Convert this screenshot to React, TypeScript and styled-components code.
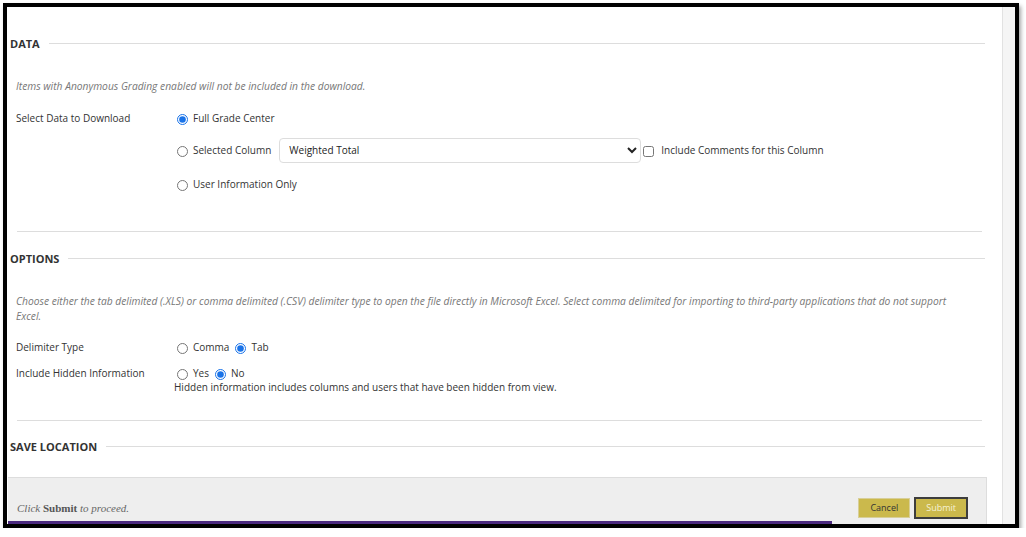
import React from 'react'
import styled, { createGlobalStyle } from 'styled-components'

const GlobalStyle = createGlobalStyle`
  html, body {
    margin: 0;
    padding: 0;
    background: #ffffff;
  }
  body {
    font-family: "Open Sans", "Liberation Sans", Arial, sans-serif;
    font-size: 10px;
    color: #333333;
  }
`

const Frame = styled.div`
  margin: 3px 0 0 3px;
  width: 1016px;
  height: 525px;
  box-sizing: border-box;
  border: 4px solid #000000;
  box-shadow: 2px 3px 4px rgba(0, 0, 0, 0.35);
  display: flex;
  overflow: hidden;
  background: #ffffff;
`

const Main = styled.div`
  flex: 1;
  display: flex;
  flex-direction: column;
  padding: 23px 17px 0 1px;
  min-width: 0;
`

const ScrollTrack = styled.div`
  width: 12px;
  background: #f5f5f5;
  border-left: 1px solid #e2e2e2;
`

const SectionHeading = styled.h2<{ $top?: number }>`
  display: flex;
  align-items: center;
  margin: ${({ $top }) => $top ?? 0}px 0 0;
  padding-left: 2px;
  height: 26px;
  font-size: 11px;
  font-weight: 700;
  color: #333333;
  text-transform: uppercase;

  &::after {
    content: '';
    flex: 1;
    height: 1px;
    margin-left: 9px;
    background: #dddddd;
  }
`

const SectionBody = styled.div<{ $gapTop: number }>`
  padding-left: 8px;
  margin-top: ${({ $gapTop }) => $gapTop}px;
`

const Note = styled.p`
  margin: 0;
  max-width: 935px;
  font-size: 10.25px;
  font-style: italic;
  color: #777777;
  line-height: 15px;
`

const FieldGrid = styled.div<{ $top: number; $rowGap: number }>`
  display: grid;
  grid-template-columns: 158px 1fr;
  row-gap: ${({ $rowGap }) => $rowGap}px;
  margin-top: ${({ $top }) => $top}px;
  align-items: start;
`

const FieldLabel = styled.div<{ $h: number }>`
  line-height: ${({ $h }) => $h}px;
  color: #333333;
`

const OptionList = styled.div`
  display: flex;
  flex-direction: column;
  gap: 8px;
`

const OptionRow = styled.div<{ $h: number; $push?: number }>`
  display: flex;
  align-items: center;
  height: ${({ $h }) => $h}px;
  margin-top: ${({ $push }) => $push ?? 0}px;
`

const Radio = styled.input.attrs({ type: 'radio' })`
  width: 11px;
  height: 11px;
  margin: 2px 5px 0 3px;
  accent-color: #1a73e8;
`

const Check = styled.input.attrs({ type: 'checkbox' })`
  width: 11px;
  height: 11px;
  margin: 2px 7px 0 2px;
`

const OptionText = styled.label`
  color: #333333;
  margin-right: 3px;
  white-space: nowrap;
`

const ColumnSelect = styled.select`
  width: 362px;
  height: 25px;
  margin-left: 5px;
  padding: 0 4px 0 5px;
  border: 1px solid #dddddd;
  border-radius: 4px;
  background: #ffffff;
  font-family: "Open Sans", "Liberation Sans", Arial, sans-serif;
  font-size: 10px;
  color: #222222;
`

const HelpText = styled.div`
  line-height: 13px;
  color: #333333;
`

const Divider = styled.hr<{ $top: number }>`
  margin: ${({ $top }) => $top}px 3px 0 9px;
  border: 0;
  border-top: 1px solid #dddddd;
  height: 0;
`

const Footer = styled.div`
  margin-top: 18px;
  margin-right: -2px;
  flex: 1;
  display: flex;
  flex-direction: column;
  padding-top: 18px;
  background: #eeeeee;
  border-top: 1px solid #dddddd;
  border-right: 1px solid #dddddd;
`

const FooterRow = styled.div`
  display: flex;
  align-items: center;
  justify-content: space-between;
  padding: 0 18px 0 9px;
  height: 23px;
`

const FooterText = styled.p`
  margin: 0;
  font-family: "Liberation Serif", "DejaVu Serif", serif;
  font-style: italic;
  font-size: 11px;
  color: #666666;

  strong {
    font-style: normal;
    font-weight: 700;
    color: #555555;
  }
`

const ButtonGroup = styled.div`
  display: flex;
  gap: 4px;
  align-items: center;
`

const ActionButton = styled.button<{ $primary?: boolean }>`
  height: ${({ $primary }) => ($primary ? 22 : 20)}px;
  padding: 0 ${({ $primary }) => ($primary ? 10 : 11)}px;
  background: #cbb94c;
  border: ${({ $primary }) => ($primary ? '2px solid #3d3d3d' : '1px solid #d8cf98')};
  border-radius: 0;
  font-family: "Open Sans", "Liberation Sans", Arial, sans-serif;
  font-size: 9px;
  color: ${({ $primary }) => ($primary ? '#f6f2d6' : '#333333')};
`

const AccentBar = styled.div`
  margin-top: auto;
  width: 824px;
  height: 3px;
  background: #4b2a7f;
`

const App = () => {
  return (
    <>
      <GlobalStyle />
      <Frame>
        <Main>
          <SectionHeading>Data</SectionHeading>
          <SectionBody $gapTop={23}>
            <Note>Items with Anonymous Grading enabled will not be included in the download.</Note>
            <FieldGrid $top={12} $rowGap={0}>
              <FieldLabel $h={24}>Select Data to Download</FieldLabel>
              <OptionList>
                <OptionRow $h={24}>
                  <Radio name="data" id="full" defaultChecked />
                  <OptionText htmlFor="full">Full Grade Center</OptionText>
                </OptionRow>
                <OptionRow $h={24}>
                  <Radio name="data" id="column" />
                  <OptionText htmlFor="column">Selected Column</OptionText>
                  <ColumnSelect defaultValue="weighted">
                    <option value="weighted">Weighted Total</option>
                    <option value="total">Total</option>
                  </ColumnSelect>
                  <Check id="comments" />
                  <OptionText htmlFor="comments">Include Comments for this Column</OptionText>
                </OptionRow>
                <OptionRow $h={24} $push={2}>
                  <Radio name="data" id="user" />
                  <OptionText htmlFor="user">User Information Only</OptionText>
                </OptionRow>
              </OptionList>
            </FieldGrid>
          </SectionBody>
          <Divider $top={35} />

          <SectionHeading $top={13}>Options</SectionHeading>
          <SectionBody $gapTop={23}>
            <Note>
              Choose either the tab delimited (.XLS) or comma delimited (.CSV) delimiter type to open the file directly in
              Microsoft Excel. Select comma delimited for importing to third-party applications that do not support Excel.
            </Note>
            <FieldGrid $top={15} $rowGap={10}>
              <FieldLabel $h={16}>Delimiter Type</FieldLabel>
              <OptionRow $h={16}>
                <Radio name="delim" id="comma" />
                <OptionText htmlFor="comma">Comma</OptionText>
                <Radio name="delim" id="tab" defaultChecked />
                <OptionText htmlFor="tab">Tab</OptionText>
              </OptionRow>
              <FieldLabel $h={16}>Include Hidden Information</FieldLabel>
              <div>
                <OptionRow $h={16}>
                  <Radio name="hidden" id="yes" />
                  <OptionText htmlFor="yes">Yes</OptionText>
                  <Radio name="hidden" id="no" defaultChecked />
                  <OptionText htmlFor="no">No</OptionText>
                </OptionRow>
                <HelpText>Hidden information includes columns and users that have been hidden from view.</HelpText>
              </div>
            </FieldGrid>
          </SectionBody>
          <Divider $top={26} />

          <SectionHeading $top={12}>Save Location</SectionHeading>

          <Footer>
            <FooterRow>
              <FooterText>
                Click <strong>Submit</strong> to proceed.
              </FooterText>
              <ButtonGroup>
                <ActionButton type="button">Cancel</ActionButton>
                <ActionButton type="button" $primary>
                  Submit
                </ActionButton>
              </ButtonGroup>
            </FooterRow>
            <AccentBar />
          </Footer>
        </Main>
        <ScrollTrack />
      </Frame>
    </>
  )
}

export default App
